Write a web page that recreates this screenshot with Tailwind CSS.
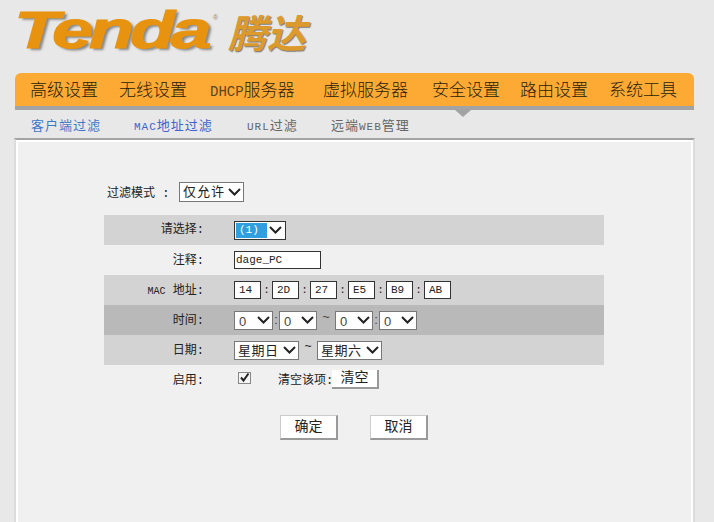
<!DOCTYPE html>
<html lang="zh-CN">
<head>
  <meta charset="UTF-8">
  <title>Tenda</title>
  <script src="https://cdn.jsdelivr.net/npm/@tailwindcss/browser@4"></script>
</head>
<body class="bg-[#e8e8e8] h-[522px] w-[714px] overflow-hidden font-['Liberation_Mono','Noto_Sans_CJK_SC',monospace] text-[12px] text-[#222]">

  <!-- Logo -->
  <div class="h-[73px] relative">
    <span class="absolute left-[14px] top-[1px] origin-left scale-x-[1.45] italic font-bold text-[51px] leading-[59px] tracking-[-3px] text-[#e8930f] [-webkit-text-stroke:1px_#e8930f] [text-shadow:2px_2px_2px_#888] font-['Liberation_Sans',sans-serif]">Tenda</span>
    <span class="absolute left-[213px] top-[14px] text-[7px] leading-[8px] text-[#a08050] font-['Liberation_Sans',sans-serif]">®</span>
    <span class="absolute left-[228px] top-[8px] font-bold italic text-[39px] leading-[46px] text-[#dc9a2c] [text-shadow:1px_1px_1px_#777] font-['Noto_Sans_CJK_SC',sans-serif]">腾达</span>
  </div>

  <!-- Main nav -->
  <nav class="relative ml-[15px] w-[679px] h-[37px] bg-[#fcaa33] border-b-4 border-[#a3a3a3] rounded-t-[6px] flex items-center pl-[15px] pt-[5px] text-[17px] font-light text-[#2a1c08]">
    <span class="w-[89px]">高级设置</span>
    <span class="w-[91px]">无线设置</span>
    <span class="w-[113px]"><span class="text-[14px] text-[#5a4520]">DHCP</span>服务器</span>
    <span class="w-[109px]">虚拟服务器</span>
    <span class="w-[88px]">安全设置</span>
    <span class="w-[89px]">路由设置</span>
    <span>系统工具</span>
    <span class="absolute left-[440px] top-[33px] mt-[4px] w-0 h-0 border-x-[8px] border-x-transparent border-t-[7px] border-t-[#a3a3a3]"></span>
  </nav>

  <!-- Sub nav -->
  <div class="h-[28px] pl-[31px] pt-[6px] flex items-center text-[13px] tracking-[1px] text-[#666]">
    <span class="w-[103px] text-[#3f78c8]">客户端过滤</span>
    <span class="w-[113px] text-[#3f62d0]"><span class="text-[11px]">MAC</span>地址过滤</span>
    <span class="w-[84px]"><span class="text-[11px]">URL</span>过滤</span>
    <span>远端<span class="text-[11px]">WEB</span>管理</span>
  </div>

  <!-- Panel -->
  <div class="ml-[14px] w-[681px] h-[384px] border-t-2 border-x-2 border-t-[#a3a3a3] border-x-[#dcdcdc] bg-[#f0f0f0] pt-[41px] shadow-[inset_0_2px_0_#fff,inset_2px_0_0_#fff,inset_-2px_0_0_#fff]">

    <div class="flex items-center h-[22px] pl-[91px]">
      <span class="w-[72px] mt-[3px]">过滤模式 :</span>
      <div class="relative w-[65px] h-[20px]">
        <select class="appearance-none w-full h-full border border-[#777] bg-white pl-[3px] text-[13px] tracking-[1px]"><option>仅允许</option></select>
        <svg class="absolute right-[2px] top-[5px] w-[15px] h-[10px] pointer-events-none" viewBox="0 0 15 10" fill="none" stroke="#222" stroke-width="2"><path d="M2 2l5.500 5.500L13 2"/></svg>
      </div>
    </div>

    <div class="ml-[88px] w-[500px] mt-[12px]">
      <div class="h-[30px] bg-[#d3d3d3] flex items-center">
        <span class="w-[100px] text-right">请选择:</span>
        <div class="ml-[30px] w-[52px] h-[19px] flex border border-[#333] bg-white p-[1px]">
          <span class="w-[31px] bg-[#2f9fe0] text-white text-[11px] leading-[15px] pl-[3px]">(1)</span>
          <svg class="w-[17px] h-[15px]" viewBox="0 0 17 15" fill="none" stroke="#222" stroke-width="2"><path d="M3 4l5.500 5.500L14 4"/></svg>
        </div>
      </div>

      <div class="h-[30px] flex items-center">
        <span class="w-[100px] text-right mt-[2px]">注释:</span>
        <input class="ml-[30px] w-[87px] h-[18px] border border-[#333] bg-white pl-[1px] text-[11px]" value="dage_PC">
      </div>

      <div class="h-[30px] bg-[#d3d3d3] flex items-center">
        <span class="w-[100px] text-right mt-[1px]"><span class="text-[10px]">MAC</span> 地址:</span>
        <div class="ml-[30px] flex items-center text-[11px]">
          <input class="w-[27px] h-[18px] border border-[#333] bg-white pl-[4px]" value="14">
          <span class="w-[11px] text-center">:</span>
          <input class="w-[27px] h-[18px] border border-[#333] bg-white pl-[4px]" value="2D">
          <span class="w-[11px] text-center">:</span>
          <input class="w-[27px] h-[18px] border border-[#333] bg-white pl-[4px]" value="27">
          <span class="w-[11px] text-center">:</span>
          <input class="w-[27px] h-[18px] border border-[#333] bg-white pl-[4px]" value="E5">
          <span class="w-[11px] text-center">:</span>
          <input class="w-[27px] h-[18px] border border-[#333] bg-white pl-[4px]" value="B9">
          <span class="w-[11px] text-center">:</span>
          <input class="w-[27px] h-[18px] border border-[#333] bg-white pl-[4px]" value="AB">
        </div>
      </div>

      <div class="h-[30px] bg-[#b9b9b9] flex items-center">
        <span class="w-[100px] text-right mt-[2px]">时间:</span>
        <div class="ml-[30px] flex items-center text-[13px] text-[#444] font-['Liberation_Sans',sans-serif]">
          <div class="relative w-[39px] h-[19px]">
            <select class="appearance-none w-full h-full border border-[#777] bg-white pl-[4px]"><option>0</option></select>
            <svg class="absolute right-[2px] top-[4px] w-[15px] h-[10px] pointer-events-none" viewBox="0 0 15 10" fill="none" stroke="#222" stroke-width="2"><path d="M2 2l5.500 5.500L13 2"/></svg>
          </div>
          <span class="w-[6px] text-center">:</span>
          <div class="relative w-[38px] h-[19px]">
            <select class="appearance-none w-full h-full border border-[#777] bg-white pl-[4px]"><option>0</option></select>
            <svg class="absolute right-[2px] top-[4px] w-[15px] h-[10px] pointer-events-none" viewBox="0 0 15 10" fill="none" stroke="#222" stroke-width="2"><path d="M2 2l5.500 5.500L13 2"/></svg>
          </div>
          <span class="w-[18px] text-center mt-[-6px]">~</span>
          <div class="relative w-[38px] h-[19px]">
            <select class="appearance-none w-full h-full border border-[#777] bg-white pl-[4px]"><option>0</option></select>
            <svg class="absolute right-[2px] top-[4px] w-[15px] h-[10px] pointer-events-none" viewBox="0 0 15 10" fill="none" stroke="#222" stroke-width="2"><path d="M2 2l5.500 5.500L13 2"/></svg>
          </div>
          <span class="w-[6px] text-center">:</span>
          <div class="relative w-[38px] h-[19px]">
            <select class="appearance-none w-full h-full border border-[#777] bg-white pl-[4px]"><option>0</option></select>
            <svg class="absolute right-[2px] top-[4px] w-[15px] h-[10px] pointer-events-none" viewBox="0 0 15 10" fill="none" stroke="#222" stroke-width="2"><path d="M2 2l5.500 5.500L13 2"/></svg>
          </div>
        </div>
      </div>

      <div class="h-[30px] bg-[#d3d3d3] flex items-center">
        <span class="w-[100px] text-right mt-[2px]">日期:</span>
        <div class="ml-[30px] flex items-center">
          <div class="relative w-[65px] h-[19px]">
            <select class="appearance-none w-full h-full border border-[#777] bg-white pl-[3px] text-[13px] tracking-[0.5px]"><option>星期日</option></select>
            <svg class="absolute right-[2px] top-[4px] w-[15px] h-[10px] pointer-events-none" viewBox="0 0 15 10" fill="none" stroke="#222" stroke-width="2"><path d="M2 2l5.500 5.500L13 2"/></svg>
          </div>
          <span class="w-[18px] text-center mt-[-6px]">~</span>
          <div class="relative w-[65px] h-[19px]">
            <select class="appearance-none w-full h-full border border-[#777] bg-white pl-[3px] text-[13px] tracking-[0.5px]"><option>星期六</option></select>
            <svg class="absolute right-[2px] top-[4px] w-[15px] h-[10px] pointer-events-none" viewBox="0 0 15 10" fill="none" stroke="#222" stroke-width="2"><path d="M2 2l5.500 5.500L13 2"/></svg>
          </div>
        </div>
      </div>

      <div class="h-[30px] flex items-center">
        <span class="w-[100px] text-right mt-[2px]">启用:</span>
        <div class="relative ml-[34px] w-[13px] h-[12px] mt-[-4px]">
          <input type="checkbox" checked class="appearance-none block w-full h-full border border-[#888] bg-[#f4f4f4]">
          <svg class="absolute left-[1px] top-[0px] w-[11px] h-[11px] pointer-events-none" viewBox="0 0 11 11" fill="none" stroke="#222" stroke-width="2"><path d="M2 5.500l2.500 3L9.500 1.500"/></svg>
        </div>
        <span class="ml-[27px] w-[54px] whitespace-nowrap mt-[1px]">清空该项:</span>
        <button class="w-[47px] h-[19px] bg-white border-r-2 border-b-2 border-[#999] text-[14px] leading-[16px] mt-[-2px]">清空</button>
      </div>
    </div>

    <div class="flex mt-[20px] ml-[264px] gap-[32px] text-[14px]">
      <button class="w-[58px] h-[25px] bg-white border-r-2 border-b-2 border-[#999] border-t border-l border-t-[#ccc] border-l-[#ccc]">确定</button>
      <button class="w-[58px] h-[25px] bg-white border-r-2 border-b-2 border-[#999] border-t border-l border-t-[#ccc] border-l-[#ccc]">取消</button>
    </div>
  </div>
</body>
</html>
